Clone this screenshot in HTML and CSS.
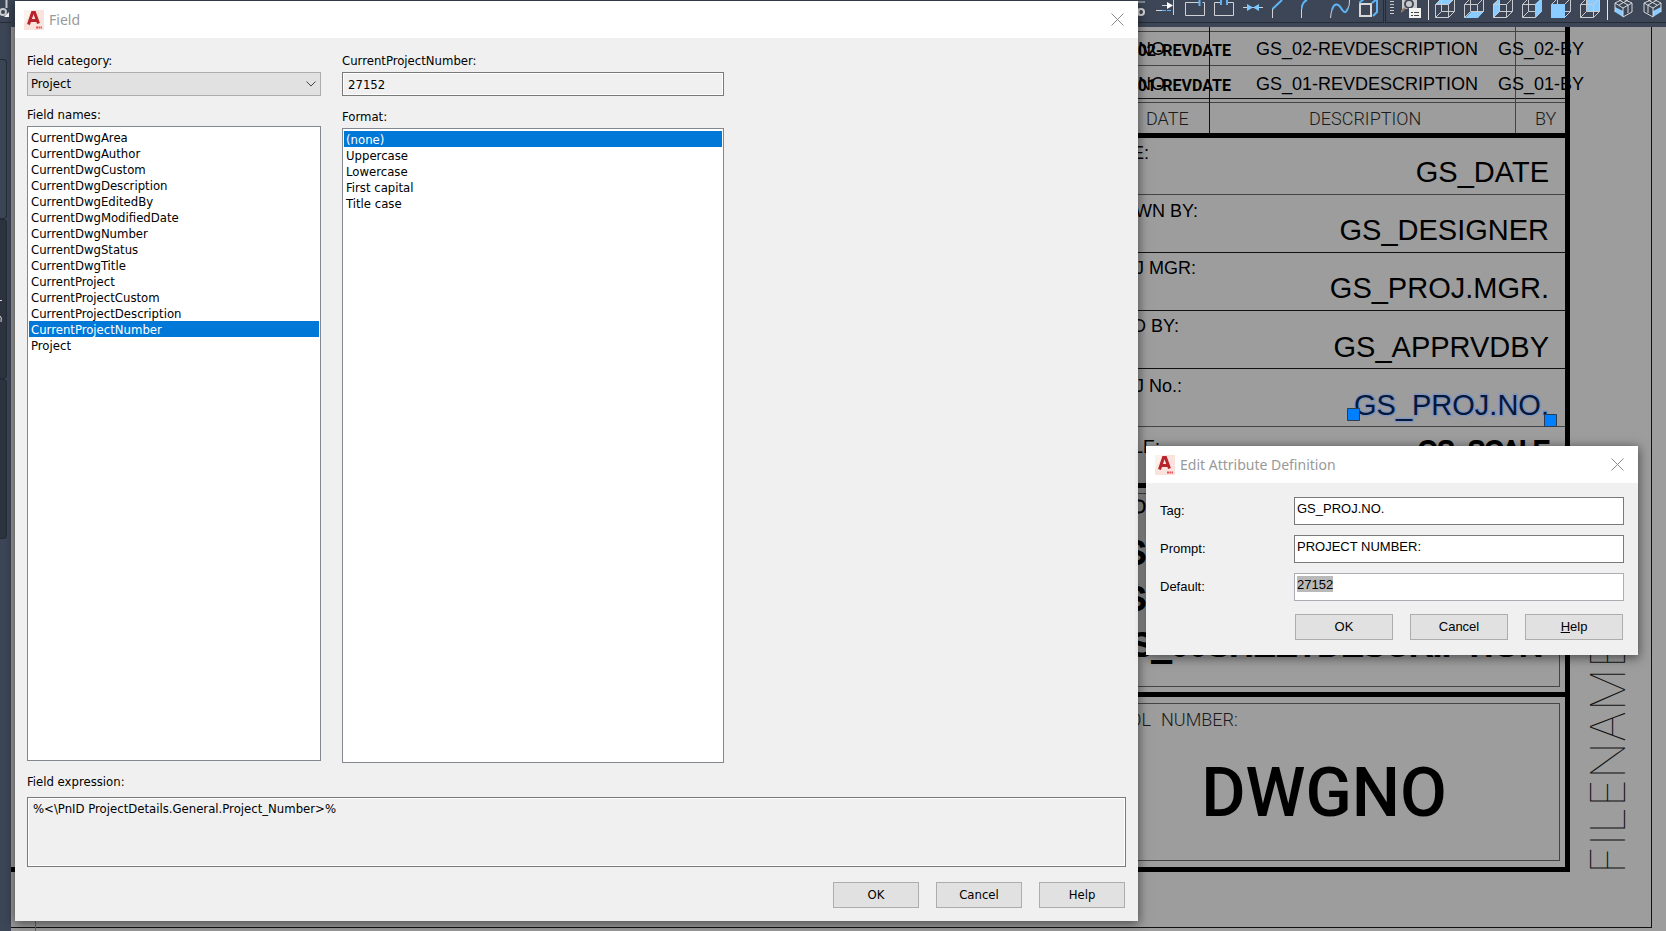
FILE: index.html
```html
<!DOCTYPE html>
<html lang="en">
<head>
<meta charset="utf-8">
<title>Field</title>
<link rel="stylesheet" href="styles.css">
</head>

<body>

<!-- shared symbols -->
<svg class="defs" width="0" height="0" aria-hidden="true">
  <symbol id="app-logo" viewBox="0 0 20 20">
    <rect width="20" height="20" fill="#f9e3dc"/>
    <path d="M0 0h9L0 14z" fill="#fdf1ec"/>
    <path d="M4.500 14.500L8.500 2.500h2l4 11M6 10.500h7" fill="none" stroke="#b8242c" stroke-width="3"/>
    <path d="M12 17.500h6" stroke="#e8505a" stroke-width="2" stroke-dasharray="2 .5"/>
  </symbol>
  <symbol id="cube" viewBox="0 0 20 20">
    <path d="M.5 4.500h13v13H.5zM6.500-3v14.500h13V-3M.5 17.500l6-6M13.500 17.500l6-6M.5 4.500l6-6M13.500 4.500l6-6" fill="none" stroke="#c9cbce"/>
  </symbol>
  <symbol id="close" viewBox="0 0 13 13">
    <path d="M.5.5l12 12M12.500.5l-12 12" fill="none" stroke="#8a8a8a"/>
  </symbol>
</svg>

<header class="toolbar">
  <div class="group tools">
    <button aria-label="Scale"><svg width="20" height="20"><path d="M10 2h8M12 8v8" stroke="#c9cbce"/><circle cx="14" cy="12" r="3" fill="none" stroke="#ddd" stroke-width="2"/></svg></button>
    <button aria-label="Extend"><svg width="20" height="20"><path d="M6 5.500h6M17.500 0v15M0 10.500h6" stroke="#d0d2d5"/><path d="M6 10.500h10" stroke="#5fb4f5" stroke-dasharray="4 1"/><path d="M11 2l6 3.500-6 3.500z" fill="#fff"/></svg></button>
    <button aria-label="Break at point"><svg width="20" height="20"><path d="M14 2.500H.5v13h19v-13h-2" fill="none" stroke="#d0d2d5"/><path d="M14.500 0v6" stroke="#5fb4f5" stroke-width="2"/></svg></button>
    <button aria-label="Break"><svg width="20" height="20"><path d="M6 2.500H.5v13h19v-13H14" fill="none" stroke="#d0d2d5"/><path d="M7 0v5M13 0v5" stroke="#5fb4f5" stroke-width="2"/></svg></button>
    <button aria-label="Join"><svg width="20" height="20"><path d="M0 7.500h20" stroke="#d0d2d5"/><path d="M4 4l6 3.500L4 11zM16 4l-6 3.500 6 3.500z" fill="#7cc6ff"/></svg></button>
    <button aria-label="Chamfer"><svg width="20" height="20"><path d="M.5 18V9" stroke="#d0d2d5"/><path d="M.5 9L10 0" stroke="#5fb4f5" stroke-width="2"/></svg></button>
    <button aria-label="Fillet"><svg width="20" height="20"><path d="M.5 18V9" stroke="#d0d2d5"/><path d="M.5 9Q1 2 6 0" fill="none" stroke="#5fb4f5" stroke-width="2"/></svg></button>
    <button aria-label="Blend curves"><svg width="20" height="20"><path d="M.5 18Q1 12 2 10M19.500 0Q20 6 17 10" fill="none" stroke="#d0d2d5"/><path d="M2 10C4 3 8 3 11 8S16 14 18 8" fill="none" stroke="#5fb4f5" stroke-width="2"/></svg></button>
    <button aria-label="Explode"><svg width="20" height="20"><path d="M1 4h11v12H1z" fill="none" stroke="#d8d8d8" stroke-width="2"/><path d="M0 3l5-4M13 3l5-4M14 16l4-4V0" fill="none" stroke="#5fb4f5" stroke-width="2"/></svg></button>
  </div>
  <div class="group views">
    <span class="grip"></span>
    <button aria-label="Named views"><svg width="20" height="20"><path d="M1 0h15v9H1z" fill="#c9cbce"/><circle cx="8" cy="4" r="4" fill="none" stroke="#444d5b" stroke-width="2"/><path d="M0 12l4-4" stroke="#9a7b66" stroke-width="2"/><path d="M8 8h12v10H8z" fill="#f2f2f2"/><path d="M10 12.500h2M13 12.500h5M10 15.500h2M13 15.500h5" stroke="#444"/></svg></button>
    <span class="rule"></span>
    <button aria-label="Top"><svg width="20" height="20"><path d="M1 4l5-5h13l-5 5z" fill="#8accff"/><use href="#cube"/></svg></button>
    <button aria-label="Bottom"><svg width="20" height="20"><use href="#cube"/><path d="M1 18l6-6h12l-5 6z" fill="#8accff"/></svg></button>
    <button aria-label="Left"><svg width="20" height="20"><path d="M0 18V4l7-6v13z" fill="#8accff"/><use href="#cube"/></svg></button>
    <button aria-label="Right"><svg width="20" height="20"><use href="#cube"/><path d="M13 18V4l7-6v13z" fill="#8accff"/></svg></button>
    <button aria-label="Front"><svg width="20" height="20"><use href="#cube"/><path d="M0 4h14v14H0z" fill="#8accff"/></svg></button>
    <button aria-label="Back"><svg width="20" height="20"><path d="M6 0h14v11H6z" fill="#8accff"/><use href="#cube"/></svg></button>
    <span class="rule"></span>
    <button aria-label="SW isometric"><svg width="20" height="20"><path d="M1 7l8 4v6l-8-5z" fill="#8accff"/><path d="M1 3l8 5 9-5M9 8v9l9-5V3M1 12V3l8-4 9 4M5 0l9 5v8M14 0L5 5" fill="none" stroke="#d8d8d8"/></svg></button>
    <button aria-label="SE isometric"><svg width="20" height="20"><path d="M18 7l-8 4v6l8-5z" fill="#8accff"/><path d="M1 3l9 5 8-5M10 8v9l-9-5V3M18 12V3l-8-4-9 4M5 0l9 5M14 0L5 5v8" fill="none" stroke="#d8d8d8"/></svg></button>
  </div>
</header>

<!-- title block of the open drawing -->
<svg class="drawing" aria-label="Drawing">
  <g class="thin">
    <path d="M1138 31.500h427M1138 65.500h427M1138 102.500h427M1138 194.500h427M1138 426.500h427" class="soft"/>
    <path d="M1138 98.500h427M1138 252.500h427M1138 310.500h427M1138 368.500h427"/>
    <path d="M1209.500 27v108"/>
    <path d="M1515.500 27v108" class="soft"/>
    <path d="M1138 493.500h421v193h-421M1138 703.500h421v157h-421" class="soft"/>
    <path d="M11 927.500h1640.500V27"/>
  </g>
  <path d="M1567.500 27v845M1138 135.500h427M1138 485.500h427M1138 694.500h427M11 869.500h1559" class="thick"/>
  <path d="M35.500 921v10" class="axis"/>

  <g class="arial18">
    <text x="1256" y="55">GS_02-REVDESCRIPTION</text>
    <text x="1256" y="90">GS_01-REVDESCRIPTION</text>
    <text x="1498" y="55">GS_02-BY</text>
    <text x="1498" y="90">GS_01-BY</text>
  </g>
  <g class="arial18 end">
    <text x="1165" y="55">NO</text>
    <text x="1165" y="90">NO</text>
    <text x="1149" y="159">DATE:</text>
    <text x="1198" y="217">DRAWN BY:</text>
    <text x="1196" y="274">PROJ MGR:</text>
    <text x="1179" y="332">APPRVD BY:</text>
    <text x="1182" y="392">PROJ No.:</text>
    <text x="1160" y="453">SCALE:</text>
  </g>
  <g class="revdate end">
    <text x="1231" y="56">02-REVDATE</text>
    <text x="1231" y="91">01-REVDATE</text>
  </g>
  <g class="simplex">
    <text x="1146" y="125">DATE</text>
    <text x="1309" y="125">DESCRIPTION</text>
    <text x="1535" y="125">BY</text>
    <text x="1161" y="726">NUMBER:</text>
  </g>
  <g class="simplex end">
    <text x="1146" y="513" class="heavy">D</text>
    <text x="1151" y="726">OL</text>
  </g>
  <g class="value end">
    <text x="1549" y="182">GS_DATE</text>
    <text x="1549" y="240">GS_DESIGNER</text>
    <text x="1549" y="298">GS_PROJ.MGR.</text>
    <text x="1549" y="357">GS_APPRVDBY</text>
    <text x="1549" y="415" class="picked">GS_PROJ.NO.</text>
  </g>
  <text x="1550" y="459" class="scale end">GS_SCALE</text>
  <g class="sheet end">
    <text x="1146" y="564">GS</text>
    <text x="1146" y="610">GS</text>
    <text x="1543" y="656">GS_00SHEETDESCRIPTION</text>
  </g>
  <text x="1324" y="816" class="dwgno">DWGNO</text>
  <text transform="translate(1625 874) rotate(-90)" class="filename">FILENAME</text>

  <path d="M1347.500 408.500h12v12h-12zM1544.500 414.500h12v12h-12z" class="handle"/>
</svg>

<aside class="palette">
  <svg width="11" height="22"><path d="M6.500 0v8" stroke="#c9cbce" stroke-width="2"/><circle cx="3" cy="12" r="3" fill="none" stroke="#c9cbce" stroke-width="2"/><path d="M9 12v5H4z" fill="#fff"/></svg>
  <div class="tab"></div>
  <div class="tab dark"><svg width="5" height="30"><path d="M0 2.500h2" stroke="#ddd"/><path d="M0 18q2 1 1 6" fill="none" stroke="#ddd"/></svg></div>
  <div class="tab dark"></div>
</aside>

<section class="dialog field">
  <div class="titlebar">
    <svg class="logo" width="20" height="20"><use href="#app-logo"/></svg>
    <h1>Field</h1>
    <button class="close" aria-label="Close"><svg width="13" height="13"><use href="#close"/></svg></button>
  </div>
  <form class="content">
    <div class="columns">
      <div class="column names">
        <label for="category">Field category:</label>
        <div class="combo">
          <select id="category"><option>Project</option></select>
          <svg width="10" height="6"><path d="M.5.5L5 5 9.500.5" fill="none" stroke="#444"/></svg>
        </div>
        <label for="names">Field names:</label>
        <select id="names" class="list" size="20">
          <option>CurrentDwgArea</option>
          <option>CurrentDwgAuthor</option>
          <option>CurrentDwgCustom</option>
          <option>CurrentDwgDescription</option>
          <option>CurrentDwgEditedBy</option>
          <option>CurrentDwgModifiedDate</option>
          <option>CurrentDwgNumber</option>
          <option>CurrentDwgStatus</option>
          <option>CurrentDwgTitle</option>
          <option>CurrentProject</option>
          <option>CurrentProjectCustom</option>
          <option>CurrentProjectDescription</option>
          <option selected>CurrentProjectNumber</option>
          <option>Project</option>
        </select>
      </div>
      <div class="column format">
        <label for="number">CurrentProjectNumber:</label>
        <input id="number" class="readonly" type="text" value="27152" readonly>
        <label for="format">Format:</label>
        <select id="format" class="list" size="20">
          <option selected>(none)</option>
          <option>Uppercase</option>
          <option>Lowercase</option>
          <option>First capital</option>
          <option>Title case</option>
        </select>
      </div>
    </div>
    <label for="expression">Field expression:</label>
    <textarea id="expression" class="readonly" readonly>%&lt;\PnID ProjectDetails.General.Project_Number&gt;%</textarea>
    <div class="buttons">
      <button type="button">OK</button>
      <button type="button">Cancel</button>
      <button type="button">Help</button>
    </div>
  </form>
</section>

<section class="dialog attribute">
  <div class="titlebar">
    <svg class="logo" width="20" height="20"><use href="#app-logo"/></svg>
    <h1>Edit Attribute Definition</h1>
    <button class="close" aria-label="Close"><svg width="13" height="13"><use href="#close"/></svg></button>
  </div>
  <form class="content">
    <div class="row"><label for="tag">Tag:</label><input id="tag" type="text" value="GS_PROJ.NO."></div>
    <div class="row"><label for="prompt">Prompt:</label><input id="prompt" type="text" value="PROJECT NUMBER:"></div>
    <div class="row"><label for="default">Default:</label><input id="default" class="marked" type="text" value="27152"></div>
    <div class="buttons">
      <button type="button">OK</button>
      <button type="button">Cancel</button>
      <button type="button"><u>H</u>elp</button>
    </div>
  </form>
</section>

</body>
</html>
```
FILE: styles.css
```css
* {
  box-sizing: border-box;
}

body {
  margin: 0;
  height: 100vh;
  overflow: hidden;
  position: relative;
  background: #9d9d9d;
  font: 13px/16px "DejaVu Sans Condensed", "DejaVu Sans", sans-serif;
  color: #000;
}

button, input, select, textarea {
  font: inherit;
  color: inherit;
  margin: 0;
  border-radius: 0;
  outline: none;
}

.defs {
  position: absolute;
}

/* toolbar */
.toolbar {
  display: flex;
  height: 27px;
  padding-left: 1127px;
  background: #3c4656;
}

.group {
  display: flex;
  flex: none;
  height: 23px;
  gap: 9px;
  border-bottom: 1px solid #252c36;
}

.group button {
  flex: none;
  width: 20px;
  height: 20px;
  padding: 0;
  border: 0;
  background: none;
}

.group svg {
  display: block;
}

.tools {
  padding-right: 4px;
  border-right: 1px solid #252c36;
}

.views {
  flex: 1;
  margin-left: 1px;
  padding-left: 4px;
  border-left: 1px solid #252c36;
}

.grip {
  width: 4px;
  height: 14px;
  margin-right: -2px;
  background: radial-gradient(circle, #c9cbce 1px, transparent 1px) 0 0 / 2px 3px;
}

.rule {
  width: 1px;
  height: 20px;
  margin: 0 -3px 0 -2px;
  background: #e8e8e8;
}

/* drawing */
.drawing {
  position: absolute;
  inset: 0;
  width: 100%;
  height: 100%;
  pointer-events: none;
  font-family: "Liberation Sans", Arial, sans-serif;
}

.thin {
  fill: none;
  stroke: #111;
  shape-rendering: crispEdges;
}

.soft {
  stroke: #444;
}

.thick {
  fill: none;
  stroke: #000;
  stroke-width: 5;
}

.axis {
  stroke: #1f9a1f;
}

.end {
  text-anchor: end;
}

.arial18 {
  font-size: 18px;
}

.revdate {
  font: bold 16px Roboto, "Liberation Sans", sans-serif;
}

.simplex {
  font: 300 18px Roboto, "Liberation Sans", sans-serif;
  fill: #1a1a1a;
}

.value {
  font-size: 29px;
}

.picked {
  fill: #06183a;
  stroke: #6f8fd0;
  stroke-width: 3;
  stroke-opacity: .6;
  paint-order: stroke;
}

.heavy {
  stroke: #000;
}

.scale {
  font-size: 25px;
  stroke: #000;
  stroke-width: 2;
}

.sheet {
  font-size: 33px;
  stroke: #000;
  stroke-width: 2;
}

.dwgno {
  font: 500 68px Roboto, "Liberation Sans", sans-serif;
  text-anchor: middle;
}

.filename {
  font: 100 48px Inter, "DejaVu Sans Light", sans-serif;
  fill: #111;
}

.handle {
  fill: #0080ff;
  stroke: #2f3c50;
}

/* left palette */
.palette {
  position: absolute;
  left: 0;
  top: 0;
  bottom: 0;
  width: 11px;
  background: #3c4656;
}

.palette > svg {
  display: block;
  height: 23px;
  border-bottom: 1px solid #252c36;
  margin-bottom: 36px;
}

.tab {
  width: 7px;
  height: 160px;
  border: 1px solid #252c36;
  border-left: 0;
  border-radius: 0 4px 4px 0;
}

.tab svg {
  display: block;
  margin-top: 78px;
}

.dark {
  background: #2d333f;
}

/* dialogs */
.dialog {
  position: absolute;
  display: flex;
  flex-direction: column;
  background: #f0f0f0;
  box-shadow: 0 2px 10px 1px rgba(0, 0, 0, .5);
}

.field {
  inset: 1px 528px 10px 15px;
}

.attribute {
  left: 1146px;
  top: 446px;
  width: 492px;
  font: 13px/16px "Liberation Sans", Arial, sans-serif;
}

.titlebar {
  display: flex;
  align-items: center;
  height: 37px;
  padding: 0 14px 0 9px;
  background: #fff;
}

.titlebar h1 {
  flex: 1;
  margin: 0 0 0 5px;
  font: 14px/20px "Noto Sans", "Open Sans", sans-serif;
  color: #999;
}

.close {
  padding: 0;
  border: 0;
  background: none;
  line-height: 0;
}

.field .content {
  flex: 1;
  min-height: 0;
  display: flex;
  flex-direction: column;
  padding: 15px 12px 13px;
}

.columns {
  flex: 1;
  min-height: 0;
  display: flex;
  gap: 21px;
}

.column {
  display: flex;
  flex-direction: column;
}

.names {
  width: 294px;
  padding-bottom: 2px;
}

.format {
  width: 382px;
}

.column label {
  margin-bottom: 3px;
}

.combo {
  position: relative;
  display: flex;
  margin-bottom: 11px;
}

.combo select {
  width: 100%;
  height: 24px;
  padding: 0 3px;
  border: 1px solid #adadad;
  background: #e1e1e1;
  appearance: none;
}

.combo svg {
  position: absolute;
  right: 5px;
  top: 9px;
}

.readonly {
  height: 24px;
  padding: 0 5px;
  border: 1px solid #7a7a7a;
  background: #f0f0f0;
  box-shadow: inset 0 0 0 1px #fff;
}

.format .readonly {
  margin-bottom: 13px;
}

.list {
  flex: 1;
  min-height: 0;
  padding: 2px 1px;
  border: 1px solid #828790;
  background: #fff;
  overflow: hidden;
}

.list option {
  height: 16px;
  min-height: 16px;
  padding: 1px 2px 0;
  line-height: 15px;
}

.list option:checked {
  background: #0078d7 linear-gradient(#0078d7, #0078d7);
  color: #fff;
}

.content > label {
  margin: 11px 0 7px;
}

textarea.readonly {
  height: 70px;
  padding: 3px 5px;
  resize: none;
}

.buttons {
  display: flex;
  justify-content: flex-end;
  gap: 17px;
  margin-top: 15px;
  padding-right: 1px;
}

.buttons button {
  width: 86px;
  height: 26px;
  padding: 0;
  border: 1px solid #adadad;
  background: #e1e1e1;
}

.attribute .content {
  padding: 14px 14px 15px;
}

.row {
  display: flex;
  align-items: center;
  margin-bottom: 10px;
}

.row label {
  flex: 1;
}

.row input {
  width: 330px;
  height: 28px;
  padding: 0 2px 6px;
  border: 1px solid #7a7a7a;
  background: #fff;
}

.row .marked {
  border-color: #abadb3;
  background: linear-gradient(#b9b9b9, #b9b9b9) 2px 2px / 36px 16px no-repeat #fff;
}

.attribute .buttons {
  margin-top: 13px;
}

.attribute .buttons button {
  width: 98px;
}
```
